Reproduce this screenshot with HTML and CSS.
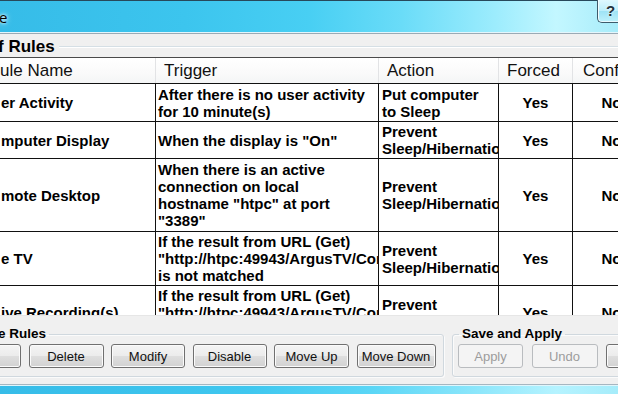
FILE: index.html
```html
<!DOCTYPE html>
<html>
<head>
<meta charset="utf-8">
<link rel="stylesheet" href="styles.css">
</head>
<body>
<div class="window">
  <div class="titlebar">
    <span class="title">e</span>
    <div class="help">?</div>
  </div>
  <div class="grouphead"><span class="gtitle">f Rules</span><span class="gline"></span></div>
  <div class="list">
    <div class="row head">
      <div class="c c1">ule Name</div>
      <div class="c c2">Trigger</div>
      <div class="c c3">Action</div>
      <div class="c c4">Forced</div>
      <div class="c c5">Confirm</div>
    </div>
    <div class="row r2l">
      <div class="c c1">er Activity</div>
      <div class="c c2"><div>After there is no user activity</div><div>for 10 minute(s)</div></div>
      <div class="c c3"><div>Put computer</div><div>to Sleep</div></div>
      <div class="c c4">Yes</div>
      <div class="c c5">No</div>
    </div>
    <div class="row r2s">
      <div class="c c1">mputer Display</div>
      <div class="c c2">When the display is "On"</div>
      <div class="c c3"><div>Prevent</div><div>Sleep/Hibernation</div></div>
      <div class="c c4">Yes</div>
      <div class="c c5">No</div>
    </div>
    <div class="row r4l">
      <div class="c c1">mote Desktop</div>
      <div class="c c2"><div>When there is an active</div><div>connection on local</div><div>hostname "htpc" at port</div><div>"3389"</div></div>
      <div class="c c3"><div>Prevent</div><div>Sleep/Hibernation</div></div>
      <div class="c c4">Yes</div>
      <div class="c c5">No</div>
    </div>
    <div class="row r3l">
      <div class="c c1">e TV</div>
      <div class="c c2"><div>If the result from URL (Get)</div><div>"http://htpc:49943/ArgusTV/Core"</div><div>is not matched</div></div>
      <div class="c c3"><div>Prevent</div><div>Sleep/Hibernation</div></div>
      <div class="c c4">Yes</div>
      <div class="c c5">No</div>
    </div>
    <div class="row r3l">
      <div class="c c1">ive Recording(s)</div>
      <div class="c c2"><div>If the result from URL (Get)</div><div>"http://htpc:49943/ArgusTV/Core"</div><div>is not matched</div></div>
      <div class="c c3"><div>Prevent</div><div>Sleep/Hibernation</div></div>
      <div class="c c4">Yes</div>
      <div class="c c5">No</div>
    </div>
  </div>
  <div class="bottom">
    <fieldset class="gbox rules">
      <legend class="lg-rules">e Rules</legend>
      <div class="btns">
        <button class="btn w74">Add</button>
        <button class="btn w75">Delete</button>
        <button class="btn w74">Modify</button>
        <button class="btn w74">Disable</button>
        <button class="btn w75">Move Up</button>
        <button class="btn w79">Move Down</button>
      </div>
    </fieldset>
    <fieldset class="gbox save">
      <legend class="lg-save">Save and Apply</legend>
      <div class="btns btns-save">
        <button class="btn dis w65">Apply</button>
        <button class="btn dis w66">Undo</button>
        <button class="btn w65">Close</button>
      </div>
    </fieldset>
  </div>
  <div class="frame"></div>
</div>
</body>
</html>
```

FILE: styles.css
```css
* { box-sizing: border-box; }
html, body { margin: 0; padding: 0; }
body {
  width: 618px;
  height: 394px;
  overflow: hidden;
  background: #f0f0f0;
  font-family: "Liberation Sans", Arial, sans-serif;
  color: #000;
}
.window {
  display: flex;
  flex-direction: column;
  height: 394px;
  width: 618px;
  overflow: hidden;
}

/* title bar */
.titlebar {
  height: 34px;
  flex: none;
  display: flex;
  justify-content: space-between;
  align-items: flex-start;
  border-top: 1px solid #27495b;
  border-bottom: 1px solid #9aaab5;
  box-shadow: inset 0 -1px 0 #e4f6fc;
  background: linear-gradient(90deg, #36bce8 0%, #3cc5ee 30%, #48cff3 50%, #6adcf8 65%, #9cecfd 80%, #c3f7ff 90%, #a8ecfa 100%);
}
.title {
  margin-top: 7px;
  margin-left: -1px;
  font-family: "Open Sans", "Liberation Sans", sans-serif;
  font-size: 15px;
  line-height: 18px;
  text-shadow: 0 0 6px #fff, 0 0 3px #fff;
}
.help {
  width: 21px;
  height: 23px;
  margin-top: -1px;
  border: 1px solid #3e5b6b;
  border-top: none;
  border-right: none;
  border-radius: 0 0 0 5px;
  background: linear-gradient(#dff8fe 0%, #bdeffb 48%, #9ee3f5 52%, #bff2fc 100%);
  box-shadow: inset 1px 0 0 #f2fdff, inset 0 -1px 0 #e8fbff;
  font-weight: bold;
  font-size: 15px;
  line-height: 22px;
  padding-left: 8px;
  color: #23313b;
  text-shadow: 0 0 3px #fff;
}

/* group header above list */
.grouphead {
  height: 23px;
  flex: none;
  display: flex;
  align-items: center;
  padding-top: 3px;
}
.gtitle {
  font-weight: bold;
  font-size: 17px;
  line-height: 20px;
  margin-left: -2px;
}
.gline {
  flex: 1;
  height: 2px;
  margin-left: 4px;
  border-top: 1px solid #d5dfe5;
  border-bottom: 1px solid #fff;
}

/* list */
.list {
  height: 258px;
  flex: none;
  overflow: hidden;
  background: #fff;
  border-top: 1px solid #4a4a4a;
}
.row {
  display: grid;
  grid-template-columns: 156px 223px 120px 74px 78px;
  border-bottom: 1px solid #111;
  font-weight: bold;
  font-size: 15px;
  line-height: 17px;
}
.c {
  border-right: 1px solid #111;
  overflow: hidden;
  white-space: nowrap;
  display: flex;
  flex-direction: column;
  justify-content: center;
}
.c1 { padding-left: 1px; }
.c2 { padding-left: 2px; }
.c3 { padding-left: 3px; }
.c4, .c5 { align-items: center; }
.head {
  height: 26px;
  font-weight: normal;
  font-size: 17px;
  color: #111;
  background: linear-gradient(#ffffff, #fafafa 60%, #f4f5f6);
}
.head .c { border-right-color: #e2e3e5; padding-left: 8px; align-items: flex-start; }
.head .c1 { padding-left: 0; }
.head .c5 { padding-left: 10px; }
.r2l { height: 38px; }
.r2s { height: 37px; }
.r4l { height: 73px; }
.r3l { height: 54px; }

/* bottom panel */
.bottom {
  height: 69px;
  flex: none;
  display: flex;
  align-items: flex-start;
  padding-top: 10px;
  border-top: 1px solid #e6e6e6;
}
.gbox {
  margin: 0;
  border: 1px solid #d0d8de;
  border-radius: 3px;
  padding: 2px 7px 8px 5px;
  box-shadow: inset 1px 1px 0 #fbfbfb, 1px 1px 0 #fbfbfb;
  min-width: 0;
}
.rules { margin-left: -59px; flex: none; }
.save { margin-left: 8.5px; flex: none; }
legend {
  font-weight: bold;
  font-size: 13.5px;
  line-height: 16px;
  padding: 0 3px;
}
.lg-rules { margin-left: 48px; }
.lg-save { margin-left: 1px; }
.btns {
  display: flex;
  gap: 7.5px;
}
.btns-save { gap: 8.5px; }
.btn {
  height: 24px;
  padding: 0;
  font-family: "Liberation Sans", Arial, sans-serif;
  font-size: 13px;
  color: #111;
  border: 1px solid #707070;
  border-radius: 3px;
  background: linear-gradient(#f4f4f4 0%, #ececec 48%, #dedede 52%, #d2d2d2 100%);
  box-shadow: inset 0 0 0 1px #fbfbfb;
}
.btn.dis {
  border-color: #b9bcbf;
  background: #f4f4f4;
  color: #9c9c9c;
  box-shadow: none;
}
.w65 { width: 65px; }
.w66 { width: 66px; }
.w74 { width: 74px; }
.w75 { width: 75px; }
.w79 { width: 79px; }

/* bottom frame */
.frame {
  height: 10px;
  flex: none;
  border-top: 1px solid #a6b6c0;
  box-shadow: inset 0 1px 0 #dff6fc;
  background: linear-gradient(90deg, #36bce8 0%, #3fc7ef 40%, #5ad6f6 60%, #8fe7fb 78%, #b5f3ff 90%, #a6ecfa 100%);
}
```
